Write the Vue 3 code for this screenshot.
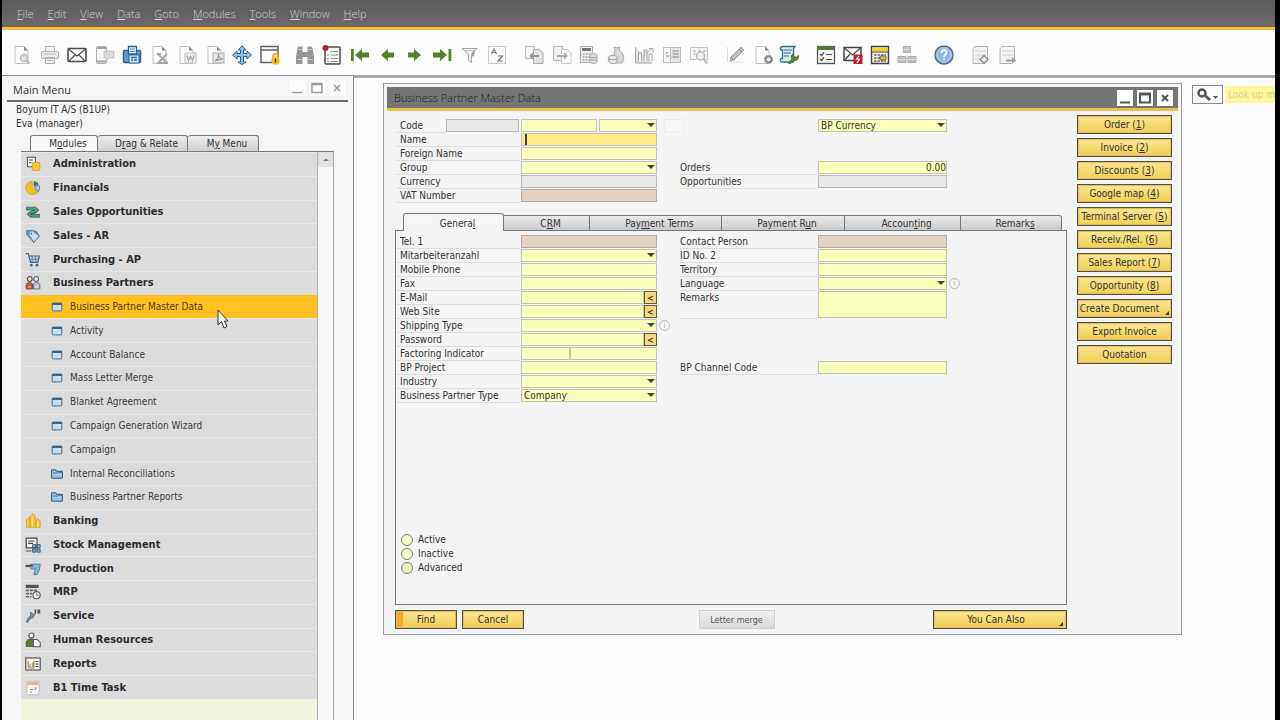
<script setup>
import { ref, h } from 'vue'

// A label in which the character after "_" is the underlined access key.
const KeyLabel = (props) => {
  const at = props.text.indexOf('_')
  if (at < 0) return h('span', props.text)
  return h('span', [
    props.text.slice(0, at),
    h('u', props.text[at + 1]),
    props.text.slice(at + 2)
  ])
}
KeyLabel.props = ['text']

const menus = ['_File', '_Edit', '_View', '_Data', '_Goto', '_Modules', '_Tools', '_Window', '_Help']

const page = '<path d="M3 1.500h9l4 4v13H3z" fill="#fdfdfd" stroke="#b4b4b4"/><path d="M12 1.500v4h4z" fill="#666"/>'
const arrow = '<path d="M4 10l7-6v3.500h6v5h-6V16z" fill="#55812d"/>'

const art = {
  preview: page + '<circle cx="12" cy="13" r="3.500" fill="#ddd" stroke="#a8a8a8" stroke-width="1.500"/><path d="M14.500 15.500l3 3" stroke="#a8a8a8" stroke-width="2"/>',
  print: '<path d="M5.500 6V1.500h9V6M5.500 12.500v6h9v-6" fill="#f4f4f4" stroke="#a0a0a0"/><rect x="1.500" y="6.500" width="17" height="7" rx="1.500" fill="#e6e6e6" stroke="#a0a0a0"/><path d="M4 9h12M5 12.500h10M7 15.500h6" stroke="#a0a0a0"/>',
  mail: '<rect x="1" y="3.500" width="18" height="13" rx="1" fill="#fff" stroke="#4c4c4c" stroke-width="1.600"/><path d="M1.500 4l8.500 7 8.500-7M2 16l6-6M18 16l-6-6" fill="none" stroke="#4c4c4c" stroke-width="1.200"/>',
  sms: '<rect x="1.500" y="1.500" width="10" height="17" rx="1" fill="#f7f7f7" stroke="#9c9c9c"/><path d="M2 3h9M2 16.500h9" stroke="#8a8a8a" stroke-width="2"/><path d="M9 6h10v7h-5l-2.500 3v-3H9z" fill="#d2d2d2" stroke="#b4b4b4"/>',
  fax: '<rect x="1.500" y="5.500" width="17" height="12" rx="1" fill="#5a9ccc" stroke="#2b6390" stroke-width="1.500"/><path d="M6.500 9V1.500h8V9z" fill="#e8f4fb" stroke="#2b6390" stroke-width="1.300"/><path d="M8 4h5M8 6.500h5" stroke="#4d86ad"/><rect x="7" y="10" width="10" height="8" fill="#d6ecf8" stroke="#2b6390"/><path d="M9 12.500h6M9 15h2m1 0h3" stroke="#2b6390" stroke-width="1.400"/>',
  excel: page + '<path d="M8 9l9 9M17 9l-9 9M7 9h4m-4 9h11" stroke="#8f8f8f" stroke-width="1.800"/>',
  word: page + '<rect x="8" y="8" width="11" height="10" fill="#eee" stroke="#aaa"/><path d="M10 10.500l1.500 5 2-4 2 4 1.500-5" fill="none" stroke="#909090" stroke-width="1.300"/>',
  pdf: page + '<rect x="8" y="8" width="11" height="10" fill="#e2e2e2" stroke="#969696"/><path d="M10 16c3-2 4-5 3.500-7 0 3 2 5 4.500 5-3 0-5 .5-8 2" fill="#fff" stroke="#777" stroke-width="1.200"/>',
  move: '<path d="M10 .8l4 4.200h-2.500v3.500H15V6l4.500 4-4.500 4v-2.500h-3.500V17H14l-4 2.500L6 17h2.500v-5.500H5V14L.5 10 5 6v2.500h3.500V5H6z" fill="#8cc2ea" stroke="#265d87"/>',
  lock: '<rect x="1" y="1.500" width="17" height="16" fill="#fbfbfb" stroke="#606060" stroke-width="1.500"/><path d="M1 5h17" stroke="#606060" stroke-width="1.500"/><path d="M13 13v-1.500a2.500 2.500 0 015 0V13" fill="none" stroke="#eaa11a" stroke-width="1.500"/><circle cx="15.500" cy="15.500" r="4.200" fill="#f9bd20"/><path d="M15.500 13.500v4" stroke="#4a3a10" stroke-width="1.500"/>',
  find: '<path d="M3 1.500h4.500V7h5V1.500H17L19 11v8h-6.500v-7h-5v7H1v-8z" fill="#969696"/><path d="M3.500 4.500H7M13 4.500h3.500M2 14.500h5M13 14.500h5" stroke="#c8c8c8"/>',
  records: '<rect x="3" y="2" width="15" height="17" rx="1" fill="#fff" stroke="#4a4a4a" stroke-width="1.500"/><path d="M8.500 6.500H16M8.500 10H16M8.500 13.500H16M8.500 16.500H16" stroke="#8c8c8c"/><path d="M5.500 10h1m-1 3.500h1m-1 3h1" stroke="#555" stroke-width="1.300"/><circle cx="3.500" cy="3" r="3" fill="#b01e28"/>',
  first: '<path d="M1 4h2.800v12H1zM5 10l7-6v3.500h7v5h-7V16z" fill="#55812d"/>',
  prev: arrow,
  next: '<g transform="matrix(-1 0 0 1 20 0)">' + arrow + '</g>',
  last: '<path d="M16.500 4h2.800v12h-2.800zM15 10L8 4v3.500H1v5h7V16z" fill="#55812d"/>',
  filter: '<path d="M2 3.500h15l-5.500 6v8l-3-2v-6z" fill="#ececec" stroke="#8f8f8f"/><path d="M4 5.500h11" stroke="#aaa"/><path d="M12 7l3-1-1 5-3 1z" fill="#888"/>',
  sort: '<rect x="1.500" y="1.500" width="17" height="17" fill="#fafafa" stroke="#bdbdbd"/><path d="M4.500 9L7 4l2.500 5M5.500 7.500h3M11 11h4.500L11 16h5" fill="none" stroke="#555" stroke-width="1.200"/>',
  copyfrom: '<path d="M1.500 1.500h9v12h-9z" fill="#f6f6f6" stroke="#aaa"/><path d="M9.500 4.500h6l3.500 3.500v10.500H9.500z" fill="#ddd" stroke="#969696"/><path d="M5 11l4-3.500V10h6v2H9v2.500z" fill="#777"/>',
  copyto: '<path d="M1.500 1.500h9v14h-9z" fill="#ececec" stroke="#a5a5a5"/><path d="M9.500 4.500h6l3.500 3.500v10.500H9.500z" fill="#f7f7f7" stroke="#bbb"/><path d="M16 11l-4-3.500V10H5v2h7v2.500z" fill="#999"/>',
  calc: '<rect x="1.500" y="1.500" width="12" height="16" fill="#eee" stroke="#999"/><path d="M3 4.500h9" stroke="#555" stroke-width="3"/><path d="M3.500 9h8m-8 3h8m-8 3h8" stroke="#8c8c8c" stroke-width="1.500" stroke-dasharray="2 1"/><path d="M11 10c0-2 7-2 7 0v7c0 2-7 2-7 0zM11 12.500h7M11 15h7" fill="#d4d4d4" stroke="#999"/>',
  money: '<path d="M8 5L7 2l3 1 3-1-1 3c5 3 6 9 3 13H4c-4-3-3-6-1-7l4-1z" fill="#cfcfcf" stroke="#989898"/><path d="M2 12c0-2 8-2 8 0v5c0 2-8 2-8 0zM2 14.500h8" fill="#e4e4e4" stroke="#8e8e8e"/>',
  chart: '<path d="M1.500 2v16H18M4.500 16V8h3v8M10 16V5h3v11" fill="#ddd" stroke="#929292"/><path d="M13 8l6-5M15 3.500h4V8M15 16V9h3v7" fill="none" stroke="#929292"/>',
  ledger: '<rect x="1.500" y="2.500" width="7" height="15" fill="#f6f6f6" stroke="#b0b0b0"/><rect x="8.500" y="2.500" width="10" height="15" fill="#e0e0e0" stroke="#a8a8a8"/><path d="M10.500 6H17M10.500 9H17M10.500 12H17M4 8h2M4 11h3" stroke="#8f8f8f" stroke-width="1.300"/>',
  inspect: '<rect x="1.500" y="2.500" width="17" height="12" fill="#f4f4f4" stroke="#bbb"/><path d="M4 6h3m2 0h3m2 0h3M4 9h3" stroke="#999"/><circle cx="11.500" cy="11" r="4" fill="#eee" stroke="#aaa" stroke-width="1.500"/><path d="M14.500 14l4 4.500" stroke="#aaa" stroke-width="2"/>',
  edit: '<path d="M1.500 2v15H17" fill="none" stroke="#dadada"/><path d="M4 16l1-4L15 2l3 3L8 15z" fill="#b0b0b0" stroke="#868686"/><path d="M5 12l3 3M13 4l3 3" stroke="#666"/>',
  pagegear: page + '<circle cx="15.500" cy="14.500" r="3" fill="#eee" stroke="#6e6e6e" stroke-width="2"/><circle cx="15.500" cy="14.500" r="3.800" fill="none" stroke="#6e6e6e" stroke-width="1.500" stroke-dasharray="1.500 1.500"/>',
  settings: '<path d="M4 1.500h12l-1.500 2v13.500H3c-2 0-2-2-1-3.500h1.500V5H2c-1.500-2 0-3.500 2-3.500z" fill="#d8ebf6" stroke="#35708f" stroke-width="1.400"/><path d="M5 5h8M5 8h7M5 11h5" stroke="#35708f"/><path d="M9 18l4-4-1-3 2-2 1.500 3h2l2-1.500-.5 3.500-2 1.500h-2.500l-3.500 3.500z" fill="#5b8a32" stroke="#3f6b20" stroke-width=".8"/>',
  checklist: '<rect x="1.500" y="1.500" width="17" height="17" fill="#f3f3ef" stroke="#555" stroke-width="1.300"/><path d="M1 3h18" stroke="#4f7a35" stroke-width="4"/><path d="M4 9l1.500 1.500L8 7.500M4 14l1.500 1.500L8 12.500M10 9.500h6M10 14.500h6" fill="none" stroke="#555" stroke-width="1.200"/>',
  alert: '<rect x="1" y="2.500" width="17" height="13" fill="#fff" stroke="#444" stroke-width="1.500"/><path d="M1.500 3l8 7 8-7M2 15l5-6" fill="none" stroke="#444" stroke-width="1.200"/><rect x="10.500" y="9.500" width="9" height="9.500" fill="#c11c24"/><path d="M16 11l-2.500 3.200h3L14 18" fill="none" stroke="#fff" stroke-width="1.200"/>',
  calendar: '<rect x="1.500" y="1.500" width="17" height="17" fill="#f6f3e4" stroke="#444" stroke-width="1.500"/><path d="M2 4.500h16" stroke="#f3ca28" stroke-width="3.500"/><path d="M2 7h16" stroke="#444"/><path d="M4 10h12M4 13h12M4 16h12" stroke="#666" stroke-width="1.600" stroke-dasharray="2.500 1"/><path d="M10 11h6v4h-6z" fill="#ddb94a" stroke="#555" stroke-width=".7"/>',
  tree: '<path d="M6.500 1.500h7v6h-7zM1 11.500h8v6H1zM11 11.500h8v6h-8z" fill="#b0b0b0" stroke="#989898"/><path d="M6.500 4.500h7M1 14.500h8M11 14.500h8M10 8v3" stroke="#d5d5d5"/>',
  help: '<circle cx="10" cy="10" r="9" fill="#8fb8df" stroke="#4f6b86" stroke-width="1.500"/><circle cx="10" cy="10" r="7" fill="none" stroke="#bcd7ef"/><path d="M7.500 8c0-4 5.500-3.500 5 0-.3 2-2.500 2-2.500 4M10 13.500V15" fill="none" stroke="#fff" stroke-width="1.700"/>',
  form1: '<path d="M4 1.500h12.500v12L14 18.500H2V4z" fill="#f1f1f1" stroke="#a0a0a0"/><path d="M4 6h11M4 10h11M4 14h5" stroke="#c0c0c0"/><path d="M13 10.500l4 4-4 4-4-4z" fill="#e5e5e5" stroke="#777" stroke-width="1.300"/>',
  form2: '<path d="M4 1.500h12.500v12L14 18.500H2V4z" fill="#f1f1f1" stroke="#a0a0a0"/><path d="M4 6h11M4 10h11" stroke="#c0c0c0"/><path d="M8 14.500h6v-2.500l4.500 3.500-4.500 3v-2H8z" fill="#888"/>',

  administration: '<path d="M3 1.500h10v12H3z" fill="#fafafa" stroke="#555" stroke-width="1.300"/><path d="M5 5h5M5 8h3" stroke="#555" stroke-width="1.300"/><rect x="9" y="8" width="9.500" height="10" rx="1" fill="#fbc634" stroke="#d99c17"/>',
  financials: '<path d="M9 2a8 8 0 100 16c3 0 5-1 7-3L9 10z" fill="#f5c01d" stroke="#c7941b"/><path d="M11 1.500c3 0 5 1.500 6 3.500l-6 4z" fill="#42794b"/><path d="M12 10l5-4c2 3 1.500 6-.5 8.500z" fill="#a9cbe5" stroke="#3a6791"/>',
  opportunities: '<path d="M2 4h11l4.500 3.500-3 3L7 13h11v3.500H7L2.500 13l3-3L12 7.500H2z" fill="#579e80" stroke="#286052"/><path d="M14 10l-7 3" stroke="#286052" stroke-width="1.500"/>',
  tag: '<path d="M2 8V3h5l7 1 4 6-7 8z" fill="#7c9fba" stroke="#4a7190"/><path d="M5 9V5l4-2 9 7-7 8z" fill="#c4ddf0" stroke="#41698a"/><circle cx="8" cy="7" r="1.200" fill="#41698a"/>',
  cart: '<path d="M1 2h3l3 11h9l2-8H5" fill="#b8d7ec" stroke="#45637b" stroke-width="1.500"/><path d="M7 9h10M9 5v8M13 5v8" stroke="#45637b" stroke-width=".8"/><circle cx="8" cy="16.500" r="1.700" fill="#45637b"/><circle cx="15" cy="16.500" r="1.700" fill="#45637b"/>',
  partners: '<circle cx="6" cy="5" r="3" fill="#f4ddd5" stroke="#62423b" stroke-width="1.300"/><circle cx="14" cy="5" r="3" fill="#e6eef5" stroke="#4e5e6d" stroke-width="1.300"/><path d="M1.500 17.500v-5c0-4 8-4 8 0v5z" fill="#d8553d" stroke="#72392f"/><path d="M10.500 17.500v-5c0-4 8-4 8 0v5z" fill="#b5c8d9" stroke="#4e5e6d"/><path d="M4 15h3M13 15h3" stroke="#fff"/>',
  banking: '<path d="M2 8l4-3v13H2zM7 4l3-3 3 3v14H7zM14 10l2-3 3 3v8h-5z" fill="#f9c842" stroke="#d49a1c"/><path d="M9 6v12M16 11v7" stroke="#ffe79a" stroke-width="1.500"/>',
  stock: '<path d="M1.500 1.500H15v12H1.500z" fill="#f7f7f7" stroke="#444" stroke-width="1.500"/><path d="M4 5h8M4 8h6M1 17.500h7" stroke="#444" stroke-width="1.500"/><path d="M9.500 9.500h4v4h-4zM15 9.500h4v4h-4zM9.500 15h4v4h-4zM15 15h4v4h-4z" fill="#79a8ce" stroke="#274d6c"/>',
  production: '<path d="M1 5.500h6V4h12l-1 7-3 6h-4l2-7H8L6 7H1z" fill="#82b4d4" stroke="#45687f"/><path d="M1 6h9" stroke="#4a4a4a" stroke-width="2"/>',
  mrp: '<path d="M1 3h16" stroke="#555" stroke-width="4"/><path d="M1 8h15M1 12h8M1 16h7" stroke="#666" stroke-width="2" stroke-dasharray="4 1"/><circle cx="14.500" cy="14" r="4.500" fill="#f4f4f4" stroke="#555" stroke-width="1.400"/><path d="M14.500 11.500V14h2.500" fill="none" stroke="#555"/>',
  service: '<path d="M2 18l1-4 4-5V5l3 3 3-1-3 5-3 1-4 5z" fill="#7591a4" stroke="#435d70"/><path d="M12 2h2v5h-2zM15.500 2H19v5h-3.500z" fill="#555"/>',
  hr: '<circle cx="8" cy="4.500" r="3.200" fill="#f4f4f4" stroke="#555" stroke-width="1.400"/><path d="M1.500 18v-5c0-5 12-6 12 0v5z" fill="#4e8340" stroke="#3c4c35"/><path d="M10.500 9.500h5l3.500 3.500v5.500h-8.500z" fill="#fafafa" stroke="#555" stroke-width="1.300"/>',
  reports: '<rect x="1" y="2.500" width="18" height="15" fill="#fafafa" stroke="#555" stroke-width="1.500"/><path d="M4 14.500V6M4 15h8" stroke="#555"/><path d="M6.500 14v-4M9.500 14V8" stroke="#e59a4b" stroke-width="2"/><path d="M11 14V6" stroke="#555"/><path d="M13 7h4M13 10h4M13 13h4" stroke="#555" stroke-width="1.300"/>',
  task: '<rect x="2.500" y="2.500" width="15" height="16" rx="1" fill="#f6f9fc" stroke="#9fb8cc"/><path d="M3 4.500h14" stroke="#f0b08d" stroke-width="4"/><path d="M6 12h4m2-2h3M6 15h3" stroke="#d86d55" stroke-width="1.300"/><path d="M11 13l3-2" stroke="#4b87b4"/>',
  form: '<rect x="2" y="3.500" width="16" height="13" rx="1" fill="#c9ddef" stroke="#3e678b" stroke-width="1.600"/><path d="M2 5h16" stroke="#2f587b" stroke-width="3"/>',
  folder: '<path d="M1 17V3h7l1.500 2.500H19V17z" fill="#9dc1e0" stroke="#2c567b" stroke-width="1.600"/><path d="M3 8.500h8l2-1.500h6" stroke="#2c567b" fill="none" stroke-width="1.400"/><path d="M3 10.500h14" stroke="#d5e7f5"/>'
}

const toolGroups = [
  { id: 'g1', icons: ['preview', 'print', 'mail', 'sms', 'fax', 'excel', 'word', 'pdf', 'move', 'lock'] },
  { id: 'g2', icons: ['find', 'records', 'first', 'prev', 'next', 'last', 'filter', 'sort'] },
  { id: 'g3', icons: ['copyfrom', 'copyto', 'calc', 'money', 'chart', 'ledger', 'inspect'] },
  { id: 'g4', icons: ['edit', 'pagegear', 'settings'] },
  { id: 'g5', icons: ['checklist', 'alert', 'calendar', 'tree'] },
  { id: 'g6', icons: ['help'] },
  { id: 'g7', icons: ['form1', 'form2'] }
]
const live = ['mail', 'fax', 'move', 'lock', 'find', 'records', 'first', 'prev', 'next', 'last', 'settings', 'checklist', 'alert', 'calendar', 'help']

const sideTabs = ['M_odules', 'D_rag & Relate', 'M_y Menu']
const selected = ref('Business Partner Master Data')
const modules = [
  { label: 'Administration', icon: 'administration' },
  { label: 'Financials', icon: 'financials' },
  { label: 'Sales Opportunities', icon: 'opportunities' },
  { label: 'Sales - AR', icon: 'tag' },
  { label: 'Purchasing - AP', icon: 'cart' },
  { label: 'Business Partners', icon: 'partners' },
  { label: 'Business Partner Master Data', icon: 'form', sub: true },
  { label: 'Activity', icon: 'form', sub: true },
  { label: 'Account Balance', icon: 'form', sub: true },
  { label: 'Mass Letter Merge', icon: 'form', sub: true },
  { label: 'Blanket Agreement', icon: 'form', sub: true },
  { label: 'Campaign Generation Wizard', icon: 'form', sub: true },
  { label: 'Campaign', icon: 'form', sub: true },
  { label: 'Internal Reconciliations', icon: 'folder', sub: true },
  { label: 'Business Partner Reports', icon: 'folder', sub: true },
  { label: 'Banking', icon: 'banking' },
  { label: 'Stock Management', icon: 'stock' },
  { label: 'Production', icon: 'production' },
  { label: 'MRP', icon: 'mrp' },
  { label: 'Service', icon: 'service' },
  { label: 'Human Resources', icon: 'hr' },
  { label: 'Reports', icon: 'reports' },
  { label: 'B1 Time Task', icon: 'task' }
]

const headLeft = [
  { id: 'code', label: 'Code', kind: 'code' },
  { id: 'name', label: 'Name', tone: 'focus' },
  { id: 'foreign', label: 'Foreign Name' },
  { id: 'group', label: 'Group', kind: 'select' },
  { id: 'currency', label: 'Currency', tone: 'off' },
  { id: 'vat', label: 'VAT Number', tone: 'tan' }
]
const headRight = [
  { id: 'bpcur', label: '', kind: 'select', value: 'BP Currency' },
  { id: 's1', kind: 'space' },
  { id: 's2', kind: 'space' },
  { id: 'orders', label: 'Orders', value: '0.00', num: true },
  { id: 'opps', label: 'Opportunities', tone: 'off' }
]
const genLeft = [
  { id: 'tel', label: 'Tel. 1', tone: 'tan' },
  { id: 'mit', label: 'Mitarbeiteranzahl', kind: 'select' },
  { id: 'mobile', label: 'Mobile Phone' },
  { id: 'fax', label: 'Fax' },
  { id: 'email', label: 'E-Mail', pick: true },
  { id: 'web', label: 'Web Site', pick: true },
  { id: 'ship', label: 'Shipping Type', kind: 'select', info: true },
  { id: 'pass', label: 'Password', pick: true },
  { id: 'factor', label: 'Factoring Indicator', kind: 'split' },
  { id: 'project', label: 'BP Project' },
  { id: 'industry', label: 'Industry', kind: 'select' },
  { id: 'bptype', label: 'Business Partner Type', kind: 'select', value: 'Company' }
]
const genRight = [
  { id: 'contact', label: 'Contact Person', tone: 'tan' },
  { id: 'idno', label: 'ID No. 2' },
  { id: 'terr', label: 'Territory' },
  { id: 'lang', label: 'Language', kind: 'select', info: true },
  { id: 'remarks', label: 'Remarks', kind: 'area' },
  { id: 's3', kind: 'space' },
  { id: 's4', kind: 'space' },
  { id: 's5', kind: 'space' },
  { id: 'channel', label: 'BP Channel Code' }
]
const sections = {
  head: [{ side: 'left', rows: headLeft }, { side: 'right', rows: headRight }],
  general: [{ side: 'left', rows: genLeft }, { side: 'right', rows: genRight }]
}

// Both blocks of fields share one row renderer.
const control = (r) => {
  const tone = r.tone ? ' ' + r.tone : ''
  if (r.kind === 'code') {
    return [
      h('input', { class: 'fld off pre', 'aria-label': 'Code series' }),
      h('input', { class: 'fld part', id: r.id }),
      h('span', { class: 'pickbox narrow' }, [h('select', { class: 'fld', 'aria-label': 'Code type' }, [h('option', '')])]),
      h('span', { class: 'ghost' })
    ]
  }
  if (r.kind === 'select') {
    return [
      h('span', { class: 'pickbox' }, [
        h('select', { class: 'fld', id: r.id, 'aria-label': r.label || r.value }, [h('option', r.value || '')])
      ]),
      r.info ? h('span', { class: 'info' }, 'i') : null
    ]
  }
  if (r.kind === 'split') {
    return [
      h('input', { class: 'fld third', id: r.id }),
      h('input', { class: 'fld', 'aria-label': r.label + ' name' })
    ]
  }
  if (r.kind === 'area') return [h('textarea', { class: 'fld', id: r.id })]
  return [
    h('input', { class: 'fld' + tone + (r.num ? ' num' : ''), id: r.id, value: r.value || '' }),
    r.pick ? h('button', { class: 'pick', type: 'button', 'aria-label': 'Open ' + r.label }, '<') : null,
    r.tone === 'focus' ? h('span', { class: 'caret' }) : null
  ]
}
const FieldRow = (props) => {
  const r = props.row
  if (r.kind === 'space') return h('div', { class: 'row' })
  return h('div', { class: ['row', r.kind, { bare: !r.label }] }, [
    h('label', { for: r.id }, r.label),
    h('div', { class: 'ctl' }, control(r))
  ])
}
FieldRow.props = ['row']

const tabs = ['Genera_l', 'C_RM', 'Pay_ment Terms', 'Payment R_un', 'Accoun_ting', 'Remark_s']
const actions = ['Order (_1)', 'Invoice (_2)', 'Discounts (_3)', 'Google map (_4)', 'Terminal Server (_5)', 'Receiv./Rel. (_6)', 'Sales Report (_7)', 'Opportunity (_8)', 'Create Document', 'Export Invoice', 'Quotation']
const states = ['Active', 'Inactive', 'Advanced']
</script>

<template>
  <div class="app">
    <nav class="menubar">
      <a v-for="m in menus" :key="m" href="#"><KeyLabel :text="m" /></a>
    </nav>

    <div class="toolbar">
      <div v-for="g in toolGroups" :key="g.id" class="group" :class="g.id">
        <button v-for="i in g.icons" :key="i" type="button" :aria-label="i" :class="{ dim: !live.includes(i) }">
          <svg viewBox="0 0 20 20" v-html="art[i]"></svg>
        </button>
      </div>
    </div>

    <div class="body">
      <aside class="side">
        <header class="side-title">
          <h2>Main Menu</h2>
          <div class="winbtns">
            <button type="button" aria-label="Minimize"><svg viewBox="0 0 16 16"><path d="M3 12.500h10" /></svg></button>
            <button type="button" aria-label="Maximize"><svg viewBox="0 0 16 16"><path d="M3 3.500h10v9H3zM3 4.500h10" /></svg></button>
            <button type="button" aria-label="Close"><svg viewBox="0 0 16 16"><path d="M5 5l6 6M11 5l-6 6" /></svg></button>
          </div>
        </header>
        <p class="who">Boyum IT A/S (B1UP)</p>
        <p class="who">Eva (manager)</p>
        <div class="side-tabs">
          <button v-for="(t, n) in sideTabs" :key="t" type="button" :class="{ on: n === 0 }"><KeyLabel :text="t" /></button>
        </div>
        <div class="tree">
          <div class="items">
            <button
              v-for="m in modules"
              :key="m.label"
              type="button"
              class="item"
              :class="{ sub: m.sub, sel: m.label === selected }"
              @click="selected = m.label"
            >
              <svg class="ico" viewBox="0 0 20 20" v-html="art[m.icon]"></svg>
              <span>{{ m.label }}</span>
              <svg v-if="m.label === selected" class="cursor" viewBox="0 0 12 20"><path d="M1 1v15l3.500-3.500L7 19l3-1.500L7.500 12H11z" /></svg>
            </button>
            <div class="blank"></div>
          </div>
          <div class="scroll"><button type="button" aria-label="Scroll up"><svg viewBox="0 0 10 6"><path d="M1 5l4-3 4 3z" /></svg></button></div>
        </div>
      </aside>

      <main class="space">
        <section class="window">
          <header class="titlebar">
            <h1>Business Partner Master Data</h1>
            <div class="winbtns">
              <button type="button" aria-label="Minimize"><svg viewBox="0 0 16 16"><path d="M3 12.500h10" /></svg></button>
              <button type="button" aria-label="Maximize"><svg viewBox="0 0 16 16"><path d="M3 3.500h10v9H3zM3 4.500h10" /></svg></button>
              <button type="button" aria-label="Close"><svg viewBox="0 0 16 16"><path d="M5 5l6 6M11 5l-6 6" /></svg></button>
            </div>
          </header>
          <div class="content">
            <form class="form" @submit.prevent>
              <div class="cols">
                <div v-for="s in sections.head" :key="s.side" :class="s.side">
                  <FieldRow v-for="r in s.rows" :key="r.id" :row="r" />
                </div>
              </div>
              <div class="tabs">
                <button v-for="(t, n) in tabs" :key="t" type="button" :class="{ on: n === 0 }"><KeyLabel :text="t" /></button>
              </div>
              <div class="panel">
                <div class="cols">
                  <div v-for="s in sections.general" :key="s.side" :class="s.side">
                    <FieldRow v-for="r in s.rows" :key="r.id" :row="r" />
                  </div>
                </div>
                <div class="states">
                  <label v-for="s in states" :key="s"><input type="radio" name="state" />{{ s }}</label>
                </div>
              </div>
              <div class="foot">
                <button type="button" class="gold find">Find</button>
                <button type="button" class="gold cancel">Cancel</button>
                <button type="button" class="grey">Letter merge</button>
                <button type="button" class="gold also">You Can Also<i class="corner"></i></button>
              </div>
            </form>
            <div class="actions">
              <button v-for="a in actions" :key="a" type="button" class="gold" :class="{ split: a === 'Create Document' }">
                <KeyLabel :text="a" /><i v-if="a === 'Create Document'" class="corner"></i>
              </button>
            </div>
          </div>
        </section>
        <div class="search">
          <button type="button" aria-label="Search">
            <svg viewBox="0 0 26 16"><circle cx="9" cy="6" r="3.500" fill="none" stroke="#555" stroke-width="2.500" /><path d="M12 8.500l5 4.500" stroke="#555" stroke-width="3" /><path d="M20 9h5l-2.500 3z" fill="#555" /></svg>
          </button>
          <input type="text" aria-label="Look up" placeholder="Look up menu" />
        </div>
      </main>
    </div>
  </div>
</template>

<style>
body { background: #000; }
* { box-sizing: border-box; }
button, input, select, textarea { font: inherit; color: inherit; margin: 0; border-radius: 0; }
button { padding: 0; }
</style>

<style scoped>
.app {
  height: 100vh;
  margin: 0 5px 0 2px;
  display: flex;
  flex-direction: column;
  overflow: hidden;
  background: #fcfcfc;
  color: #333;
  font: 10px/14px "DejaVu Sans Condensed", "DejaVu Sans", sans-serif;
}
h1, h2, p { margin: 0; font-weight: 400; }

.menubar {
  flex: none;
  display: flex;
  gap: 14px;
  height: 30px;
  padding: 5px 15px 0;
  background: linear-gradient(#5c5c5c, #6b6b6b);
  border-bottom: 3px solid #f3bf3f;
  box-shadow: inset 0 -1px #7d6434;
  font: 300 11px/18px "Open Sans", sans-serif;
}
.menubar a { color: #d0d0d0; text-decoration: none; }

.toolbar {
  flex: none;
  display: flex;
  align-items: center;
  gap: 17px;
  height: 45px;
  padding: 4px 10px 0;
  background: #fdfdfd;
}
.group { display: flex; justify-content: space-between; }
.g1 { width: 268px; margin-right: -2px; }
.g2 { width: 212px; }
.g3 { width: 185px; }
.g4 { width: 73px; }
.g5 { width: 101px; }
.g7 { width: 47px; }
.group button { width: 20px; height: 20px; border: 0; background: none; }
.group .dim { opacity: .8; }
.group svg { display: block; width: 20px; height: 20px; }

.body { flex: 1; min-height: 0; display: flex; }
.side {
  flex: none;
  width: 352px;
  display: flex;
  flex-direction: column;
  padding: 0 5px;
  background: #f5f5f5;
  border: 1px solid #8d8d8d;
  border-width: 1px 1px 0 0;
}
.side-title {
  flex: none;
  display: flex;
  justify-content: space-between;
  align-items: center;
  height: 26px;
  padding: 0 3px 0 6px;
  border-bottom: 2px solid #6a6a6a;
}
.side-title h2 { font: 11px/18px "Open Sans", sans-serif; color: #333; padding-top: 4px; }
.winbtns { display: flex; gap: 4px; }
.winbtns button { width: 16px; height: 16px; border: 0; background: #fdfdfd; }
.winbtns svg { display: block; width: 16px; height: 16px; fill: none; stroke: #999; stroke-width: 1.5px; }
.who { padding-left: 9px; color: #333; }
.side .who:nth-of-type(1) { padding-top: 1px; }
.side-tabs { display: flex; flex: none; padding: 4px 0 0 23px; height: 20px; }
.side-tabs button {
  height: 16px;
  border: 1px solid #777;
  border-bottom: 0;
  border-left-width: 0;
  border-radius: 3px 3px 0 0;
  background: linear-gradient(#ededed, #cfcfcf);
  padding-left: 8px;
  width: 71px;
}
.side-tabs button.on { width: 68px; border-left-width: 1px; background: #f8f8f8; }
.side-tabs button:nth-child(2) { width: 90px; }
.tree {
  flex: 1;
  min-height: 0;
  display: flex;
  margin: 0 14px;
  border-top: 1px solid #777;
  border-right: 1px solid #aaa;
}
.items { flex: 1; display: flex; flex-direction: column; border-right: 1px solid #b0b0b0; background: #dcdcdc; }
.item {
  position: relative;
  flex: 1 1 0;
  min-height: 0;
  display: flex;
  align-items: center;
  gap: 12px;
  padding-left: 4px;
  border: 0;
  border-top: 1px solid #e8e8e8;
  background: #dcdcdc;
  font: bold 11px/14px "DejaVu Sans Condensed", "DejaVu Sans", sans-serif;
  text-align: left;
  color: #2c2c2c;
}
.item.sub { padding-left: 30px; gap: 7px; font-weight: 400; font-size: 10px; color: #3a3a3a; }
.item.sel { background: #ffc020; border-color: #ffc020; color: #503a12; }
.ico { flex: none; width: 16px; height: 16px; }
.sub .ico { width: 12px; height: 12px; }
.cursor { position: absolute; left: 196px; top: 13px; width: 12px; height: 20px; fill: #fff; stroke: #333; z-index: 2; }
.blank { flex: none; height: 21px; background: #f1f3dd; }
.scroll { flex: none; width: 15px; background: #f8f8f8; }
.scroll button { display: block; width: 15px; height: 15px; border: 0; background: #e2e2e2; }
.scroll svg { width: 8px; height: 5px; fill: #777; display: block; margin: auto; }

.space {
  flex: 1;
  min-width: 0;
  display: flex;
  align-items: flex-start;
  gap: 10px;
  padding: 5px 0 0 29px;
  border-top: 3px solid #a9a9a9;
}
.window {
  flex: 1;
  min-width: 0;
  border: 1px solid #9a9a9a;
  padding: 3px;
  background: #f4f4f4;
}
.titlebar {
  display: flex;
  justify-content: space-between;
  align-items: center;
  height: 24px;
  padding: 0 5px 0 7px;
  background: #757575;
  border-bottom: 3px solid #e8c34b;
}
.titlebar h1 { font: 300 11px/18px "Open Sans", sans-serif; color: #1c1c1c; }
.titlebar svg { stroke: #555; stroke-width: 2px; }
.content { display: flex; gap: 10px; padding: 4px 6px 2px 8px; }
.form { flex: 1; min-width: 0; }
.cols { display: flex; gap: 23px; padding: 4px 0 0 2px; }
.panel .cols { padding: 3px 0 0 1px; }
.left { flex: none; width: 260px; }
.right { flex: none; width: 267px; }
.form :deep(.row) { display: flex; height: 14px; }
.form :deep(.row label) { flex: 1; height: 14px; padding-left: 3px; border-bottom: 1px solid #dcdcdc; white-space: nowrap; line-height: 14px; }
.right :deep(.row label) { padding-left: 0; }
.form :deep(.row.bare label) { border: 0; }
.form :deep(.ctl) { position: relative; flex: none; display: flex; width: 136px; margin-left: 1px; }
.right :deep(.ctl) { width: 129px; }
.form :deep(.row.code .ctl) { width: 211px; gap: 2px; }
.form :deep(.fld) {
  appearance: none;
  flex: 1;
  min-width: 0;
  width: 100%;
  height: 13px;
  padding: 0 2px;
  border: 1px solid #c3c3b4;
  background: #faffb9;
  line-height: 12px;
  outline: 0;
  resize: none;
  display: block;
}
.form :deep(.fld.off) { background: #e8e8e8; border-color: #b9b9b9; }
.form :deep(.fld.tan) { background: #e4d3c3; border-color: #b3aca6; }
.form :deep(.fld.focus) { background: #ffeb87; }
.form :deep(.fld.num) { text-align: right; padding-right: 0; }
.form :deep(.fld.pre) { flex: none; width: 73px; }
.form :deep(.fld.third) { flex: none; width: 49px; }
.form :deep(.row.area), .form :deep(.row.area label) { height: 28px; }
.form :deep(textarea.fld) { height: 27px; }
.form :deep(.pickbox) { position: relative; flex: 1; display: block; }
.form :deep(.pickbox.narrow) { flex: none; width: 58px; }
.form :deep(.pickbox)::after {
  content: "";
  position: absolute;
  right: 2px;
  top: 4px;
  border: 4px solid transparent;
  border-top-color: #444;
  border-bottom: 0;
  pointer-events: none;
}
.form :deep(.ghost) { position: absolute; left: 218px; top: 0; width: 20px; height: 13px; border: 1px solid #ebebeb; background: #f6f6f6; }
.form :deep(.caret) { position: absolute; left: 4px; top: 1px; width: 2px; height: 11px; background: #444; }
.form :deep(.pick) { flex: none; width: 13px; height: 13px; border: 1px solid #6e5b2c; background: #f3da80; font-size: 9px; font-weight: 700; line-height: 10px; }
.form :deep(.info) {
  position: absolute;
  right: -13px;
  top: 1px;
  width: 11px;
  height: 11px;
  border: 1px solid #bbb;
  border-radius: 50%;
  color: #aaa;
  font-size: 8px;
  line-height: 9px;
  text-align: center;
}

.tabs {
  display: grid;
  grid-template-columns: 101fr 86fr 132fr 123fr 116fr 101fr;
  height: 16px;
  margin: 11px 5px 0 8px;
  position: relative;
}
.tabs button {
  height: 16px;
  margin-top: 1px;
  border: 1px solid #777;
  border-left: 0;
  background: linear-gradient(#ececec, #c9c9c9);
  padding-left: 8px;
  line-height: 13px;
}
.tabs button.on {
  height: 18px;
  margin-top: -1px;
  padding-top: 2px;
  border-left: 1px solid #777;
  border-bottom: 0;
  border-radius: 3px 3px 0 0;
  background: #f5f5f5;
}
.tabs button:last-child { border-radius: 0 3px 0 0; }
.panel { display: flex; flex-direction: column; min-height: 375px; padding: 1px 0 29px; border: 1px solid #777; }
.states { margin-top: auto; padding-left: 5px; display: flex; flex-direction: column; }
.states label { display: flex; align-items: center; gap: 5px; height: 14px; }
.states input { appearance: none; width: 12px; height: 12px; border: 1px solid #777; border-radius: 50%; background: #f6fbc8; }

.gold { position: relative; height: 19px; border: 1px solid #55503f; box-shadow: inset 0 0 0 1px #d9bd62; background: linear-gradient(#fbe694, #f2cf55); line-height: 16px; white-space: nowrap; }
.corner { position: absolute; right: 3px; bottom: 2px; border: 2px solid transparent; border-right-color: #333; border-bottom-color: #333; }
.foot { display: flex; gap: 5px; padding-top: 5px; }
.find, .cancel { width: 62px; }
.find { background: linear-gradient(90deg, #f8a823 7px, transparent 7px), linear-gradient(#fbe694, #f2cf55); }
.cancel { margin-right: 16px; }
.grey { width: 76px; height: 19px; margin-left: auto; margin-right: auto; border: 1px solid #d0d0d0; background: linear-gradient(#eee, #dadada); color: #555; font-size: 9px; }
.also { width: 134px; padding-right: 8px; }
.actions { flex: none; width: 95px; display: flex; flex-direction: column; gap: 4px; }
.actions .split { padding-right: 10px; }
.actions .split .corner { right: 2px; }

.search { flex: none; display: flex; width: 83px; height: 20px; margin-top: 2px; }
.search button { flex: none; width: 31px; height: 19px; border: 1px solid #8a8a8a; background: #fbfbfb; }
.search svg { display: block; width: 26px; height: 16px; }
.search input { flex: 1; min-width: 0; height: 17px; margin: 1px 0 0 2px; padding: 0 0 0 3px; border: 0; background: #fff79d; }
.search input::placeholder { color: #d6cf86; opacity: 1; }
</style>
